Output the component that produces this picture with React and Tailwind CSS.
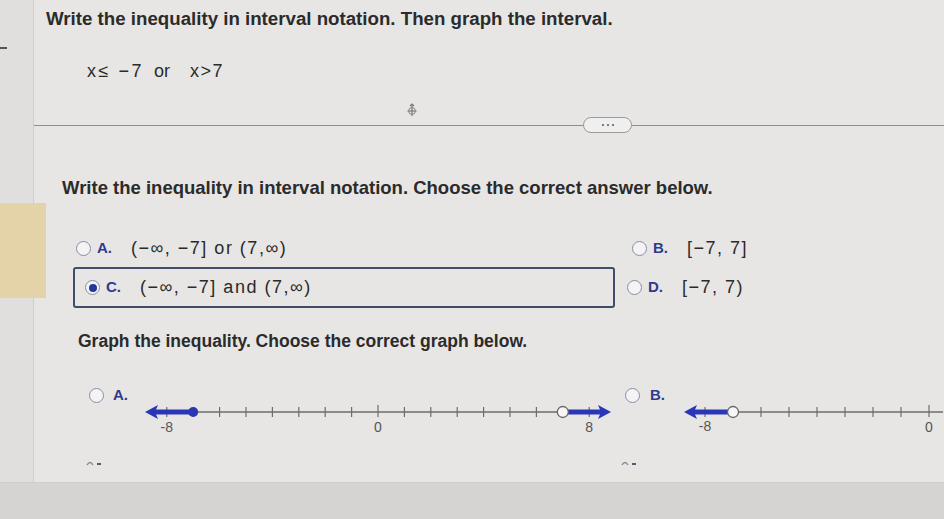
import React from 'react';

const font = { fontFamily: '"Liberation Sans", Arial, sans-serif' };

function Radio({ checked }) {
  return (
    <span className="inline-flex items-center justify-center w-[15px] h-[15px] rounded-full border-[1.5px] border-[#8a8ca6] bg-[#f4f4f4] shrink-0">
      {checked && <span className="w-[8px] h-[8px] rounded-full bg-[#27369a]" />}
    </span>
  );
}

function Caret() {
  return (
    <svg width="16" height="8" viewBox="0 0 16 8">
      <path d="M1 6 Q4 1 7 6" fill="none" stroke="#8a8a94" strokeWidth="1.4" />
      <rect x="11" y="4" width="4" height="2" fill="#5a5a70" />
    </svg>
  );
}

function MoveIcon() {
  return (
    <svg width="12" height="14" viewBox="0 0 12 14">
      <path d="M6 1 L6 13" stroke="#777" strokeWidth="1.2" />
      <path d="M4 3 L6 1 L8 3" fill="none" stroke="#777" strokeWidth="1.1" />
      <path d="M1.5 8 L10.5 8" stroke="#777" strokeWidth="1.2" />
      <circle cx="6" cy="8" r="3.4" fill="none" stroke="#888" strokeWidth="1" />
    </svg>
  );
}

// number line A: -8..8, unit 26.4, zero at 240
function LineA() {
  const u = 26.4;
  const z = 240;
  const ticks = [];
  for (let i = -8; i <= 8; i++) ticks.push(i);
  return (
    <svg width="480" height="40" viewBox="0 0 480 40">
      <line x1="10" y1="12" x2="470" y2="12" stroke="#6d6d6d" strokeWidth="1.3" />
      {ticks.map((t) => (
        <line key={t} x1={z + t * u} y1={t === 0 ? 5 : 7} x2={z + t * u} y2={17} stroke="#6d6d6d" strokeWidth="1.2" />
      ))}
      <line x1="14" y1="12" x2={z - 7 * u} y2="12" stroke="#2a36b8" strokeWidth="5" />
      <path d="M7 12 L20 5 L17 12 L20 19 Z" fill="#2a36b8" />
      <circle cx={z - 7 * u} cy="12" r="5" fill="#2a36b8" />
      <line x1={z + 7 * u} y1="12" x2="465" y2="12" stroke="#2a36b8" strokeWidth="5" />
      <path d="M473 12 L460 5 L463 12 L460 19 Z" fill="#2a36b8" />
      <circle cx={z + 7 * u} cy="12" r="5.5" fill="#f6f6f6" stroke="#666" strokeWidth="1.3" />
      <text x={z - 8 * u} y="32" fontSize="14" fill="#555" textAnchor="middle" style={font}>-8</text>
      <text x={z} y="32" fontSize="14" fill="#555" textAnchor="middle" style={font}>0</text>
      <text x={z + 8 * u} y="32" fontSize="14" fill="#555" textAnchor="middle" style={font}>8</text>
    </svg>
  );
}

// number line B: zero at 250, unit 28, cut at right edge
function LineB() {
  const u = 28;
  const z = 250;
  const ticks = [];
  for (let i = -8; i <= 0; i++) ticks.push(i);
  return (
    <svg width="264" height="40" viewBox="0 0 264 40">
      <line x1="8" y1="12" x2="264" y2="12" stroke="#6d6d6d" strokeWidth="1.3" />
      {ticks.map((t) => (
        <line key={t} x1={z + t * u} y1={t === 0 ? 5 : 7} x2={z + t * u} y2={17} stroke="#6d6d6d" strokeWidth="1.2" />
      ))}
      <line x1="12" y1="12" x2={z - 7 * u} y2="12" stroke="#2a36b8" strokeWidth="5" />
      <path d="M5 12 L18 5 L15 12 L18 19 Z" fill="#2a36b8" />
      <circle cx={z - 7 * u} cy="12" r="5.5" fill="#f6f6f6" stroke="#666" strokeWidth="1.3" />
      <text x={z - 8 * u} y="31" fontSize="14" fill="#555" textAnchor="middle" style={font}>-8</text>
      <text x={z} y="32" fontSize="14" fill="#555" textAnchor="middle" style={font}>0</text>
    </svg>
  );
}

function Choice({ letter, children, checked }) {
  return (
    <div className="flex items-center">
      <Radio checked={checked} />
      <span className="ml-[6px] w-[34px] text-[15px] font-bold text-[#2f3a8f]">{letter}</span>
      <span className="text-[18px] text-[#2a2a2a] tracking-[1.5px] whitespace-pre">{children}</span>
    </div>
  );
}

export default function App() {
  return (
    <div className="w-[944px] h-[519px] overflow-hidden bg-[#e7e6e4] flex flex-col" style={font}>
      <div className="h-[482px] flex">
        {/* left gutter */}
        <div className="w-[34px] shrink-0 bg-[#e0dfdd] border-r border-[#cfcecc] flex flex-col">
          <div className="h-[47px]" />
          <div className="w-[7px] h-[2px] bg-[#555]" />
          <div className="h-[154px]" />
          <div className="h-[95px] w-[46px] bg-[#e4d2a8]" />
        </div>

        <div className="flex-1 flex flex-col">
          <h1 className="ml-[12px] mt-[7px] text-[18.7px] leading-[24px] font-bold text-[#2b2b2b]">
            Write the inequality in interval notation. Then graph the interval.
          </h1>

          <div className="ml-[53px] mt-[29px] text-[18px] leading-[22px] text-[#2b2b2b] flex items-center">
            <span className="tracking-[2.5px]">x≤ −7</span>
            <span className="ml-[10px]">or</span>
            <span className="ml-[20px] tracking-[1.5px]">x&gt;7</span>
          </div>

          <div className="ml-[372px] mt-[21px] h-[14px]">
            <MoveIcon />
          </div>

          <div className="flex items-center">
            <div className="w-[549px] h-px bg-[#8e8e8e]" />
            <div className="w-[49px] h-[16px] rounded-full border border-[#9a9a9a] bg-[#efefef] flex items-center justify-center gap-[3px]">
              <span className="w-[2px] h-[2px] rounded-full bg-[#555]" />
              <span className="w-[2px] h-[2px] rounded-full bg-[#555]" />
              <span className="w-[2px] h-[2px] rounded-full bg-[#555]" />
            </div>
            <div className="flex-1 h-px bg-[#8e8e8e]" />
          </div>

          <h2 className="ml-[28px] mt-[43px] text-[18.5px] leading-[24px] font-bold text-[#2b2b2b]">
            Write the inequality in interval notation. Choose the correct answer below.
          </h2>

          <div className="mt-[36px] grid grid-cols-[596px_1fr]">
            <div className="ml-[42px] h-[24px] flex items-center">
              <Choice letter="A.">{'(−∞, −7] or (7,∞)'}</Choice>
            </div>
            <div className="h-[24px] flex items-center ml-[2px]">
              <Choice letter="B.">{'[−7, 7]'}</Choice>
            </div>
          </div>

          <div className="mt-[7px] grid grid-cols-[596px_1fr] items-center">
            <div className="ml-[39px] w-[542px] h-[41px] border-2 border-[#3f4d6b] rounded-[3px] flex items-center pl-[10px]">
              <Choice letter="C." checked>{'(−∞, −7] and (7,∞)'}</Choice>
            </div>
            <div className="-ml-[3px] flex items-center">
              <Choice letter="D.">{'[−7, 7)'}</Choice>
            </div>
          </div>

          <h3 className="ml-[44px] mt-[21px] text-[17.5px] leading-[24px] font-bold text-[#2b2b2b]">
            Graph the inequality. Choose the correct graph below.
          </h3>

          <div className="mt-[31px] flex">
            <div className="ml-[55px] w-[535px] flex flex-col">
              <div className="flex items-start">
                <div className="flex items-center">
                  <Radio />
                  <span className="ml-[9px] text-[15px] font-bold text-[#2f3a8f]">A.</span>
                </div>
                <div className="ml-[10px] mt-[16px]">
                  <LineA />
                </div>
              </div>
              <div className="ml-[-3px] mt-[19px]">
                <Caret />
              </div>
            </div>
            <div className="ml-[1px] flex flex-col">
              <div className="flex items-start">
                <div className="flex items-center">
                  <Radio />
                  <span className="ml-[10px] text-[15px] font-bold text-[#2f3a8f]">B.</span>
                </div>
                <div className="ml-[14px] mt-[16px]">
                  <LineB />
                </div>
              </div>
              <div className="ml-[-4px] mt-[19px]">
                <Caret />
              </div>
            </div>
          </div>
        </div>
      </div>
      <div className="flex-1 bg-[#d6d4d3] border-t border-[#cfcdcc]" />
    </div>
  );
}
